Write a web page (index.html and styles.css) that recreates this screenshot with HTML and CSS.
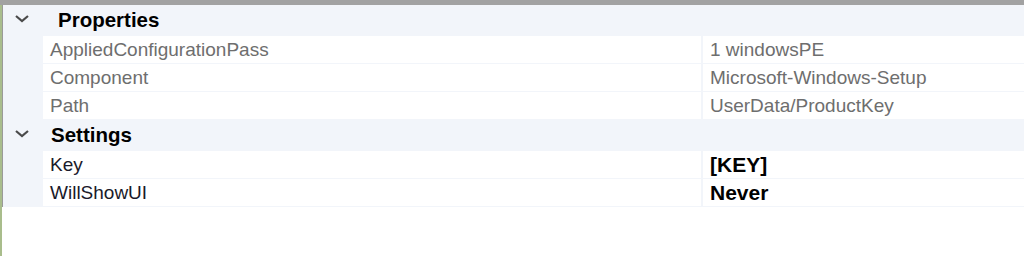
FILE: index.html
```html
<!DOCTYPE html>
<html lang="en">
<head>
    <meta charset="UTF-8">
    <title>Properties</title>
    <link rel="stylesheet" href="styles.css">
</head>
<body>
    <div class="topbar"></div>
    <div class="grid">
        <!-- Properties category -->
        <div class="category">
            <span class="toggle">
                <svg width="16" height="10" viewBox="0 0 16 10"><path d="M2 2 L8 7 L14 2" fill="none" stroke="#4a4a4a" stroke-width="2.2"/></svg>
            </span>
            <span class="category-name first">Properties</span>
        </div>
        <div class="prop readonly">
            <div class="prop-name">AppliedConfigurationPass</div>
            <div class="prop-value">1 windowsPE</div>
        </div>
        <div class="prop readonly">
            <div class="prop-name">Component</div>
            <div class="prop-value">Microsoft-Windows-Setup</div>
        </div>
        <div class="prop readonly">
            <div class="prop-name">Path</div>
            <div class="prop-value">UserData/ProductKey</div>
        </div>

        <!-- Settings category -->
        <div class="category">
            <span class="toggle">
                <svg width="16" height="10" viewBox="0 0 16 10"><path d="M2 2 L8 7 L14 2" fill="none" stroke="#4a4a4a" stroke-width="2.2"/></svg>
            </span>
            <span class="category-name">Settings</span>
        </div>
        <div class="prop">
            <div class="prop-name">Key</div>
            <div class="prop-value bold">[KEY]</div>
        </div>
        <div class="prop">
            <div class="prop-name">WillShowUI</div>
            <div class="prop-value bold">Never</div>
        </div>
        <div class="empty"></div>
    </div>
</body>
</html>
```

FILE: styles.css
```css
body {
    margin: 0;
    padding: 0;
    font-family: "Liberation Sans", Arial, sans-serif;
    font-size: 19px;
    background-color: white;
    height: 256px;
    overflow: hidden;
}

.topbar {
    height: 5px;
    background-color: #a2a2a2;
}

.grid {
    border-left: 2px solid #a9bd8c;
    box-shadow: inset 1px 0 0 #9a9a9a;
    height: 251px;
    display: flex;
    flex-direction: column;
    background-color: #f2f5fa;
}

.category {
    height: 30px;
    display: flex;
    align-items: center;
    margin-bottom: 1px;
}

.toggle {
    width: 40px;
    display: flex;
    justify-content: center;
    box-sizing: border-box;
}

.toggle svg {
    display: block;
    margin-top: -2px;
}

.category-name {
    font-weight: bold;
    font-size: 20.5px;
    color: #000;
    padding-left: 9px;
}

.category-name.first {
    padding-left: 16px;
}

.prop {
    height: 27px;
    margin-left: 41px;
    margin-bottom: 1px;
    display: flex;
    gap: 2px;
}

.prop-name,
.prop-value {
    background-color: white;
    display: flex;
    align-items: center;
    padding-left: 7px;
    color: #1a1a2a;
}

.prop-name {
    width: 658px;
    box-sizing: border-box;
}

.prop-value {
    flex: 1;
}

.prop.readonly .prop-name,
.prop.readonly .prop-value {
    color: #6e6e6e;
}

.prop-value.bold {
    font-weight: bold;
    font-size: 21px;
    color: #000;
}

.empty {
    flex: 1;
    background-color: white;
}
```
